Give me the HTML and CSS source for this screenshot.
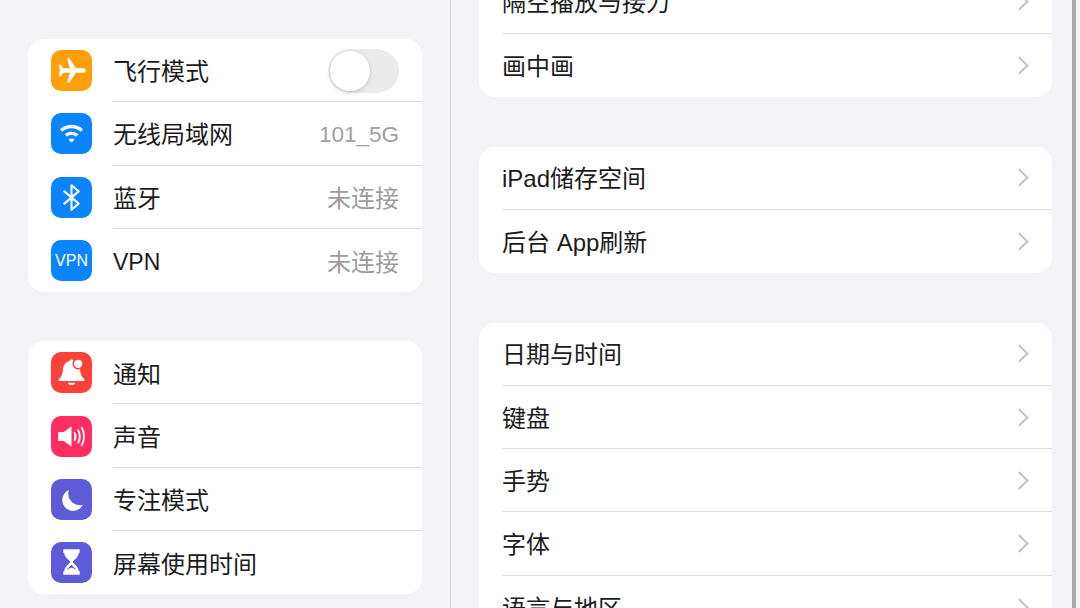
FILE: index.html
```html
<!DOCTYPE html>
<html lang="zh-CN">
<head>
  <meta charset="UTF-8">
  <title>设置</title>
  <link rel="stylesheet" href="styles.css">
</head>
<body>
  <div class="sidebar">
    <div class="card">
      <div class="row">
        <div class="icon orange">
          <svg viewBox="0 0 40 40"><path d="M34 20c0-1.400-1.500-2.300-3.300-2.300h-6.400L18 8h-2.500l3 9.700H12L9.600 14.500H7.500L8.700 20l-1.200 5.500h2.100l2.400-3.200h6.500l-3 9.700H18l6.300-9.700h6.400c1.800 0 3.300-.9 3.300-2.300z"/></svg>
        </div>
        <div class="row-body">
          <span class="label">飞行模式</span>
          <div class="toggle"><div class="knob"></div></div>
        </div>
      </div>
      <div class="row">
        <div class="icon blue">
          <svg viewBox="0 0 40 40"><path d="M20 11.500c4.300 0 8.200 1.600 11.200 4.300l-2.200 2.400c-2.400-2.100-5.500-3.400-9-3.400s-6.600 1.300-9 3.400l-2.200-2.400c3-2.700 6.900-4.300 11.200-4.300zM20 18.200c2.500 0 4.800 1 6.600 2.500l-2.200 2.400c-1.200-1-2.700-1.600-4.400-1.600s-3.200.6-4.400 1.600l-2.200-2.400c1.800-1.500 4.100-2.500 6.600-2.500zM20 24.800c1.100 0 2.100.4 2.900 1.100L20 29l-2.900-3.100c.8-.7 1.800-1.100 2.900-1.100z"/></svg>
        </div>
        <div class="row-body">
          <span class="label">无线局域网</span>
          <span class="value latin">101_5G</span>
        </div>
      </div>
      <div class="row">
        <div class="icon blue">
          <svg viewBox="0 0 40 40"><path class="line" d="M13 14l14 12-7 6V8l7 6-14 12"/></svg>
        </div>
        <div class="row-body">
          <span class="label">蓝牙</span>
          <span class="value">未连接</span>
        </div>
      </div>
      <div class="row">
        <div class="icon blue"><span class="vpn">VPN</span></div>
        <div class="row-body">
          <span class="label label-latin">VPN</span>
          <span class="value">未连接</span>
        </div>
      </div>
    </div>

    <div class="card">
      <div class="row">
        <div class="icon red">
          <svg viewBox="0 0 40 40"><path d="M20 7c1 0 1.800.7 2 1.700 4 1 6 4.500 6.300 8 .3 4 1 7 4.200 10 .6.600.2 1.500-.6 1.500H8.100c-.8 0-1.200-.9-.6-1.500 3.200-3 3.900-6 4.200-10 .3-3.500 2.300-7 6.300-8 .2-1 1-1.700 2-1.700z"/><path d="M16.500 30h7c-.3 1.400-1.800 2.300-3.500 2.300s-3.200-.9-3.500-2.300z"/><circle class="ring" cx="26.500" cy="11.500" r="4.800"/></svg>
        </div>
        <div class="row-body"><span class="label label-low">通知</span></div>
      </div>
      <div class="row">
        <div class="icon pink">
          <svg viewBox="0 0 40 40"><path d="M8 15.500h4.500L20 10v20l-7.500-5.500H8c-.6 0-1-.4-1-1v-7c0-.6.400-1 1-1z"/><path class="line thin" d="M23 16.500c1.200 2.200 1.200 4.800 0 7M26.500 13.800c2 3.800 2 8.600 0 12.400M30 11.500c2.800 5.200 2.800 11.800 0 17"/></svg>
        </div>
        <div class="row-body"><span class="label">声音</span></div>
      </div>
      <div class="row">
        <div class="icon indigo">
          <svg viewBox="0 0 40 40"><path d="M17.500 10.800A10.500 10.500 0 1 0 31 25A11 11 0 0 1 17.500 10.800z"/></svg>
        </div>
        <div class="row-body"><span class="label">专注模式</span></div>
      </div>
      <div class="row">
        <div class="icon indigo">
          <svg viewBox="0 0 40 40"><path d="M12 7H28V10.500H27C27 15 22.500 17 21.200 19.500 22.500 22 27 24 27 28.500H28V32H12V28.500H13C13 24 17.500 22 18.800 19.500 17.500 17 13 15 13 10.500H12Z"/><path class="cut" d="M20 22c-1 2-4 3.500-4.500 5.500 1.500-1.500 3-2.500 4.500-2.500s3 1 4.500 2.500C24 25.500 21 24 20 22z"/></svg>
        </div>
        <div class="row-body"><span class="label">屏幕使用时间</span></div>
      </div>
    </div>
  </div>

  <div class="detail">
    <div class="card">
      <div class="row plain"><div class="row-body"><span class="label">隔空播放与接力</span><span class="chevron"></span></div></div>
      <div class="row plain"><div class="row-body"><span class="label">画中画</span><span class="chevron"></span></div></div>
    </div>
    <div class="card">
      <div class="row plain"><div class="row-body"><span class="label">iPad储存空间</span><span class="chevron"></span></div></div>
      <div class="row plain"><div class="row-body"><span class="label">后台 App刷新</span><span class="chevron"></span></div></div>
    </div>
    <div class="card">
      <div class="row plain"><div class="row-body"><span class="label">日期与时间</span><span class="chevron"></span></div></div>
      <div class="row plain"><div class="row-body"><span class="label">键盘</span><span class="chevron"></span></div></div>
      <div class="row plain"><div class="row-body"><span class="label">手势</span><span class="chevron"></span></div></div>
      <div class="row plain"><div class="row-body"><span class="label">字体</span><span class="chevron"></span></div></div>
      <div class="row plain"><div class="row-body"><span class="label">语言与地区</span><span class="chevron"></span></div></div>
    </div>
  </div>

  <div class="scroll-thumb"></div>
</body>
</html>
```

FILE: styles.css
```css
* {
  box-sizing: border-box;
  margin: 0;
  padding: 0;
}
html, body {
  height: 100%;
}
body {
  position: relative;
  display: flex;
  overflow: hidden;
  background-color: #f3f3f8;
  color: #1c1c1e;
  font-family: "Liberation Sans", "Noto Sans CJK SC", sans-serif;
  font-size: 24px;
}
.sidebar {
  flex: 0 0 451px;
  height: 100%;
  padding: 39px 28px 0;
  border-right: 1px solid #d2d2d6;
  display: flex;
  flex-direction: column;
  gap: 49px;
}
.detail {
  flex: 1;
  height: 100%;
  padding: 0 28px;
  display: flex;
  flex-direction: column;
  gap: 49.500px;
}
.detail .card:first-child {
  margin-top: -29.600px;
}
.card {
  flex: none;
  background: #fff;
  border-radius: 16px;
  overflow: hidden;
}
.row {
  height: 63.300px;
  display: flex;
  align-items: center;
  padding-left: 23px;
  gap: 21px;
}
.row-body {
  flex: 1;
  height: 100%;
  display: flex;
  align-items: center;
  justify-content: space-between;
  padding-right: 23px;
  border-bottom: 1px solid #dedee0;
}
.row:last-child .row-body {
  border-bottom: none;
}
.label {
  white-space: nowrap;
  padding-bottom: 1px;
}
.label-low {
  padding-bottom: 0;
}
.plain .label {
  padding-bottom: 2px;
}
.label-latin {
  font-size: 23px;
  padding: 3px 0 0;
}
.value {
  color: #9c9ca0;
}
.latin {
  font-size: 22.500px;
  padding-top: 3px;
  color: #a0a0a4;
}
.icon {
  flex: none;
  width: 41px;
  height: 41px;
  border-radius: 10px;
  display: flex;
  align-items: center;
  justify-content: center;
}
.icon svg {
  width: 41px;
  height: 41px;
  fill: #fff;
}
.icon .line {
  fill: none;
  stroke: #fff;
  stroke-width: 2;
  stroke-linejoin: round;
  stroke-linecap: round;
}
.icon .thin {
  stroke-width: 1.800;
}
.icon .cut {
  fill: #5d5bd8;
}
.icon .ring {
  fill: #fff;
  stroke: #fa4238;
  stroke-width: 1.500;
}
.orange { background: #ff9f0a; }
.blue { background: #0a84ff; }
.red { background: #fa4238; }
.pink { background: #ff2d60; }
.indigo { background: #5d5bd8; }
.vpn {
  color: #fff;
  font-size: 16px;
}
.toggle {
  width: 71px;
  height: 44px;
  margin-top: 1px;
  border-radius: 22px;
  background: #ebebee;
  padding: 2px;
}
.knob {
  width: 40px;
  height: 40px;
  border-radius: 50%;
  background: #fff;
  box-shadow: 0 0 0 1px rgba(0, 0, 0, 0.04), 0 2px 5px rgba(0, 0, 0, 0.12);
}
.chevron {
  width: 13px;
  height: 13px;
  margin-right: 3px;
  border-top: 2.500px solid #c4c4c7;
  border-right: 2.500px solid #c4c4c7;
  transform: rotate(45deg);
}
.scroll-thumb {
  position: absolute;
  top: 0;
  bottom: 0;
  left: 1072px;
  width: 4px;
  background: #a8a8ae;
}
```
